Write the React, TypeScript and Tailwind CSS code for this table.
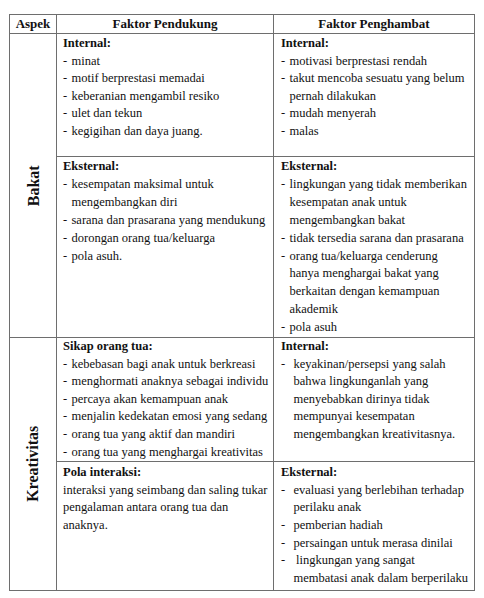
import React from "react";

type Item = { lines: string[]; extra?: boolean };

function Bullets({ items, wide }: { items: Item[]; wide?: boolean }) {
  return (
    <div>
      {items.map((it, i) => (
        <div key={i} className="flex">
          <span className={wide ? "w-[12.5px] shrink-0" : "w-[8.5px] shrink-0"}>-</span>
          <span className={it.extra ? "pl-[2.5px]" : ""}>
            {it.lines.map((l, j) => (
              <React.Fragment key={j}>
                {j > 0 && <br />}
                {l}
              </React.Fragment>
            ))}
          </span>
        </div>
      ))}
    </div>
  );
}

function Title({ children }: { children: React.ReactNode }) {
  return <div className="font-bold">{children}</div>;
}

const cell = "border border-[#6e6e6e] align-top text-left whitespace-nowrap";

export default function App() {
  return (
    <div
      className="pl-[9px] pt-[14px] text-[12.5px] leading-[17.6px] text-[#111]"
      style={{ fontFamily: '"Liberation Serif", "Times New Roman", serif' }}
    >
      <table className="border-collapse table-fixed w-[465px]">
        <colgroup>
          <col className="w-[47px]" />
          <col className="w-[217px]" />
          <col className="w-[201px]" />
        </colgroup>
        <thead>
          <tr className="h-[19px] text-[13px]">
            <th className="border border-[#6e6e6e] font-bold text-center p-0">Aspek</th>
            <th className="border border-[#6e6e6e] font-bold text-center p-0">Faktor Pendukung</th>
            <th className="border border-[#6e6e6e] font-bold text-center p-0">Faktor Penghambat</th>
          </tr>
        </thead>
        <tbody>
          <tr className="h-[123px]">
            <td rowSpan={2} className="border border-[#6e6e6e] p-0 align-middle">
              <div className="flex items-center justify-center">
                <span className="-rotate-90 text-[16px] font-bold whitespace-nowrap">Bakat</span>
              </div>
            </td>
            <td className={`${cell} pl-[6px] pt-[1px]`}>
              <Title>Internal:</Title>
              <Bullets
                items={[
                  { lines: ["minat"] },
                  { lines: ["motif berprestasi memadai"] },
                  { lines: ["keberanian mengambil resiko"] },
                  { lines: ["ulet dan tekun"] },
                  { lines: ["kegigihan dan daya juang."] },
                ]}
              />
            </td>
            <td className={`${cell} pl-[7px] pt-[1px]`}>
              <Title>Internal:</Title>
              <Bullets
                items={[
                  { lines: ["motivasi berprestasi rendah"] },
                  { lines: ["takut mencoba sesuatu yang belum", "pernah dilakukan"] },
                  { lines: ["mudah menyerah"] },
                  { lines: ["malas"] },
                ]}
              />
            </td>
          </tr>
          <tr className="h-[180px] leading-[17.9px]">
            <td className={`${cell} pl-[6px] pt-[1px]`}>
              <Title>Eksternal:</Title>
              <Bullets
                items={[
                  { lines: ["kesempatan maksimal untuk", "mengembangkan diri"] },
                  { lines: ["sarana dan prasarana yang mendukung"] },
                  { lines: ["dorongan orang tua/keluarga"] },
                  { lines: ["pola asuh."] },
                ]}
              />
            </td>
            <td className={`${cell} pl-[7px] pt-[1px]`}>
              <Title>Eksternal:</Title>
              <Bullets
                items={[
                  {
                    lines: [
                      "lingkungan yang tidak memberikan",
                      "kesempatan anak untuk",
                      "mengembangkan bakat",
                    ],
                  },
                  { lines: ["tidak tersedia sarana dan prasarana"] },
                  {
                    lines: [
                      "orang tua/keluarga cenderung",
                      "hanya menghargai bakat yang",
                      "berkaitan dengan kemampuan",
                      "akademik",
                    ],
                  },
                  { lines: ["pola asuh"] },
                ]}
              />
            </td>
          </tr>
          <tr className="h-[121px]">
            <td rowSpan={2} className="border border-[#6e6e6e] p-0 align-middle">
              <div className="flex items-center justify-center">
                <span className="-rotate-90 text-[16px] font-bold whitespace-nowrap">Kreativitas</span>
              </div>
            </td>
            <td className={`${cell} pl-[6px] pt-0`}>
              <Title>Sikap orang tua:</Title>
              <Bullets
                items={[
                  { lines: ["kebebasan bagi anak untuk berkreasi"] },
                  { lines: ["menghormati anaknya sebagai individu"] },
                  { lines: ["percaya akan kemampuan anak"] },
                  { lines: ["menjalin kedekatan emosi yang sedang"] },
                  { lines: ["orang tua yang aktif dan mandiri"] },
                  { lines: ["orang tua yang menghargai kreativitas"] },
                ]}
              />
            </td>
            <td className={`${cell} pl-[7px] pt-0`}>
              <Title>Internal:</Title>
              <Bullets
                wide
                items={[
                  {
                    lines: [
                      "keyakinan/persepsi yang salah",
                      "bahwa lingkunganlah yang",
                      "menyebabkan dirinya tidak",
                      "mempunyai kesempatan",
                      "mengembangkan kreativitasnya.",
                    ],
                  },
                ]}
              />
            </td>
          </tr>
          <tr className="h-[129px]">
            <td className={`${cell} pl-[6px] pt-[2px]`}>
              <Title>Pola interaksi:</Title>
              <div>
                interaksi yang seimbang dan saling tukar
                <br />
                pengalaman antara orang tua dan
                <br />
                anaknya.
              </div>
            </td>
            <td className={`${cell} pl-[7px] pt-[2px]`}>
              <Title>Eksternal:</Title>
              <Bullets
                wide
                items={[
                  { lines: ["evaluasi yang berlebihan terhadap", "perilaku anak"] },
                  { lines: ["pemberian hadiah"] },
                  { lines: ["persaingan untuk merasa dinilai"] },
                  { lines: ["lingkungan yang sangat"], extra: true },
                ]}
              />
              <div className="pl-[12.5px]">membatasi anak dalam berperilaku</div>
            </td>
          </tr>
        </tbody>
      </table>
    </div>
  );
}
